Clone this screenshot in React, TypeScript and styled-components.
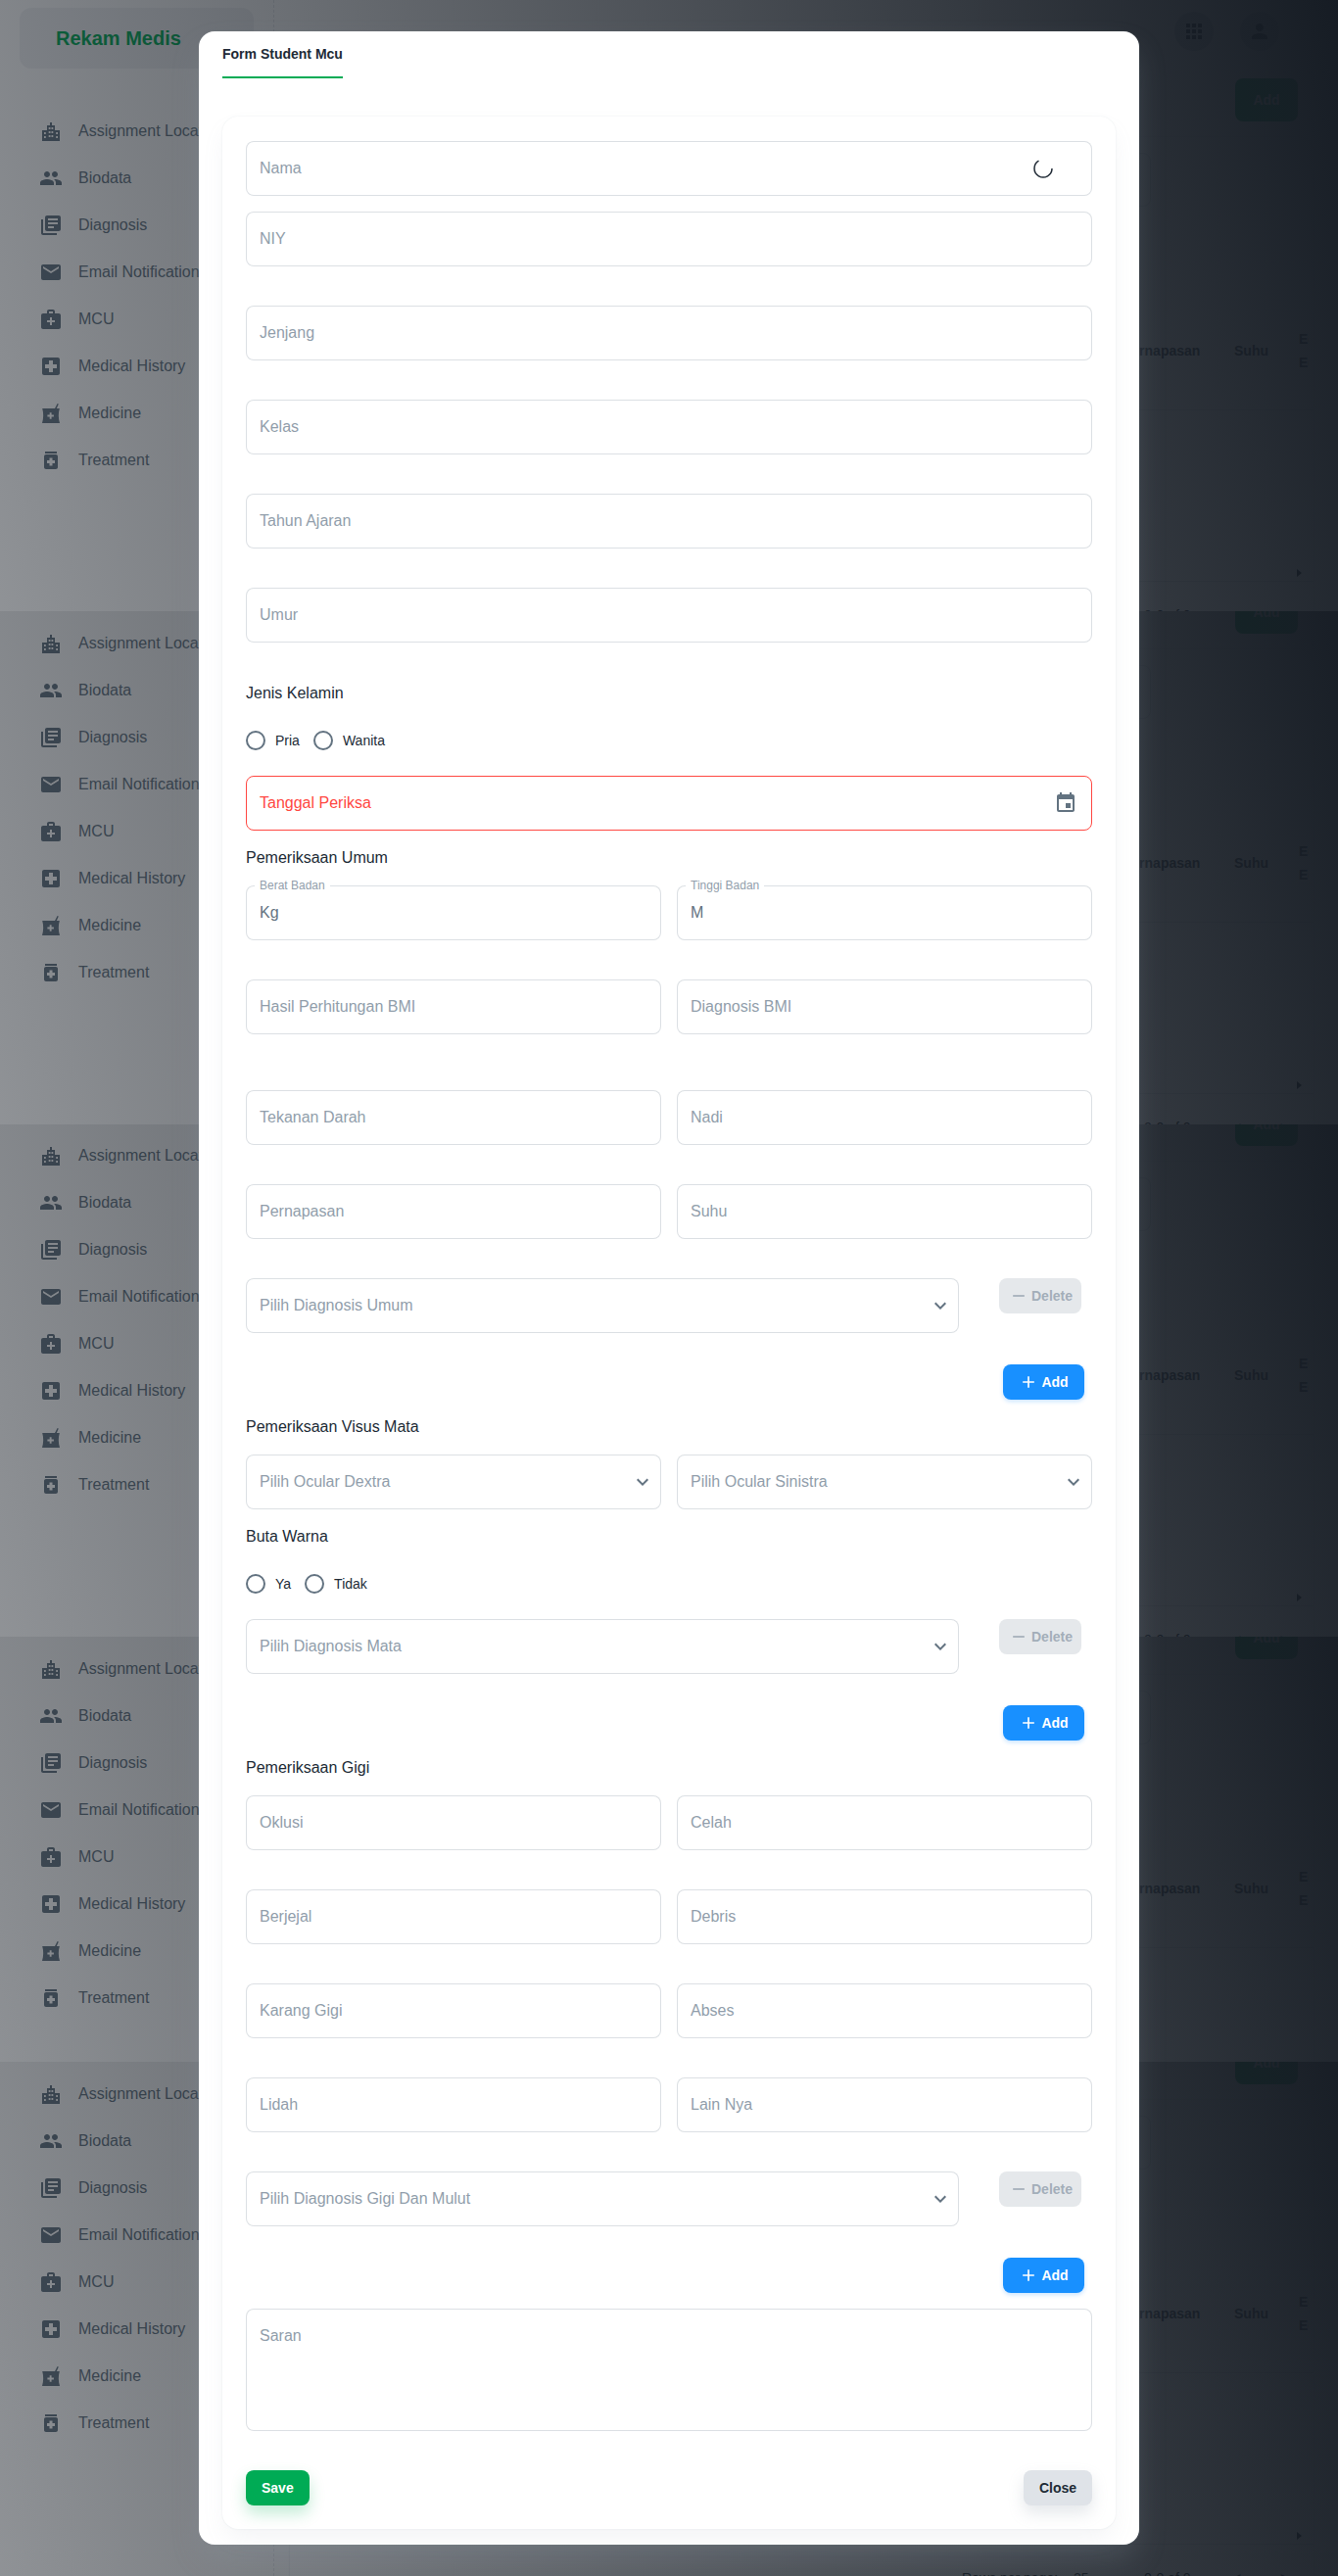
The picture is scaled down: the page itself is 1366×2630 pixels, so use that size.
import React from "react";
import styled, { createGlobalStyle } from "styled-components";
import {
  MdAdd,
  MdApps,
  MdEmail,
  MdEvent,
  MdKeyboardArrowDown,
  MdLibraryBooks,
  MdLocalHospital,
  MdMedicalServices,
  MdMedication,
  MdPeople,
  MdPerson,
  MdRemove,
} from "react-icons/md";

const GlobalStyle = createGlobalStyle`
  html, body {
    margin: 0;
    padding: 0;
    background: #fff;
  }
  * {
    box-sizing: border-box;
  }
  body {
    font-family: "Liberation Sans", Arial, sans-serif;
    color: #212b36;
  }
`;

const Page = styled.div`
  position: relative;
  width: 1366px;
  height: 2630px;
  overflow: hidden;
`;

/* the page behind the dialog, one slice per scrolled screen */
const Strip = styled.div<{ $height: number }>`
  height: ${(p) => p.$height}px;
  overflow: hidden;
`;

const Screen = styled.div<{ $scroll: number }>`
  position: relative;
  display: flex;
  width: 1366px;
  height: 626px;
  margin-top: -${(p) => p.$scroll}px;
  overflow: hidden;
  background: #fff;
`;

const Backdrop = styled.div`
  position: absolute;
  inset: 0;
  background: linear-gradient(75deg, rgba(22, 28, 36, 0.48) 0%, rgb(22, 28, 36) 100%);
`;

const Sidebar = styled.aside`
  flex: 0 0 280px;
  border-right: 1px dashed rgba(145, 158, 171, 0.24);
`;

const Logo = styled.div`
  display: flex;
  align-items: center;
  height: 62px;
  margin: 8px 20px 40px;
  padding-left: 37px;
  border-radius: 12px;
  background: rgba(145, 158, 171, 0.12);
  color: #00ab55;
  font-size: 20px;
  font-weight: 700;
`;

const NavItem = styled.div`
  display: flex;
  align-items: center;
  gap: 16px;
  height: 48px;
  padding-left: 40px;
  color: #637381;
  font-size: 16px;
  white-space: nowrap;

  svg {
    flex: none;
  }
`;

const Main = styled.main`
  flex: 1;
  min-width: 0;
  padding: 0 25px 0 16px;
`;

const TopBar = styled.div`
  display: flex;
  justify-content: flex-end;
  gap: 27px;
  height: 64px;
  padding: 12px 35px 0 0;
`;

const RoundIcon = styled.div`
  display: flex;
  align-items: center;
  justify-content: center;
  width: 40px;
  height: 40px;
  border-radius: 50%;
  background: #d0d6dc;
  color: #212b36;
`;

const ActionRow = styled.div`
  display: flex;
  justify-content: flex-end;
  margin: 16px 16px 16px 0;
`;

const GreenAction = styled.div`
  display: flex;
  align-items: center;
  justify-content: center;
  width: 64px;
  height: 44px;
  border-radius: 8px;
  background: #00ab55;
  color: #fff;
  font-size: 14px;
  font-weight: 700;
`;

const ListCard = styled.section`
  height: 560px;
  border-radius: 16px;
  overflow: hidden;
  box-shadow: 0 0 2px rgba(145, 158, 171, 0.4);
`;

const SearchBox = styled.div`
  width: 863px;
  height: 55px;
  margin: 16px 16px 0;
  border: 1px solid rgba(145, 158, 171, 0.32);
  border-radius: 8px;
`;

const HeadRow = styled.div`
  display: flex;
  align-items: center;
  height: 122px;
  margin-top: 86px;
  padding-left: 850px;
  border-bottom: 1px solid rgba(145, 158, 171, 0.24);
  color: #404a55;
  font-size: 14px;
  font-weight: 700;
  white-space: nowrap;
`;

const HeadCell = styled.span<{ $width: number }>`
  flex: 0 0 ${(p) => p.$width}px;
`;

const StackedHead = styled.div`
  display: flex;
  flex-direction: column;
  gap: 8px;
  width: 10px;
  overflow: hidden;
`;

const ScrollTrack = styled.div`
  display: flex;
  align-items: center;
  justify-content: flex-end;
  height: 18px;
  margin-top: 157px;
  padding-right: 12px;
  border-bottom: 1px solid rgba(145, 158, 171, 0.24);
`;

const ScrollArrow = styled.span`
  width: 0;
  height: 0;
  border-top: 4px solid transparent;
  border-bottom: 4px solid transparent;
  border-left: 5px solid #212b36;
`;

const Pagination = styled.div`
  display: flex;
  align-items: center;
  height: 68px;
  padding-left: 686px;
  color: #212b36;
  font-size: 14px;
  white-space: nowrap;
`;

const PageText = styled.span<{ $width: number }>`
  flex: 0 0 ${(p) => p.$width}px;
`;

/* dialog */
const Modal = styled.div`
  position: absolute;
  top: 32px;
  left: 203px;
  width: 960px;
  height: 2566px;
  padding: 0 24px;
  border-radius: 16px;
  background: #fff;
  box-shadow: 0 0 2px rgba(145, 158, 171, 0.24), 0 16px 32px -4px rgba(145, 158, 171, 0.24);
`;

const TabBar = styled.div`
  display: flex;
  height: 48px;
`;

const Tab = styled.div`
  display: flex;
  align-items: center;
  width: 123px;
  border-bottom: 2px solid #00ab55;
  color: #212b36;
  font-size: 14px;
  font-weight: 700;
  white-space: nowrap;
`;

const FormCard = styled.div`
  display: flex;
  flex-direction: column;
  height: 2463px;
  margin-top: 39px;
  padding: 25px 24px 24px;
  border-radius: 16px;
  background: #fff;
  box-shadow: 0 0 2px rgba(145, 158, 171, 0.2), 0 12px 24px -4px rgba(145, 158, 171, 0.12);
`;

const Row = styled.div<{ $top?: number }>`
  display: flex;
  gap: 16px;
  margin-top: ${(p) => p.$top ?? 0}px;
`;

const ButtonRow = styled.div<{ $top: number }>`
  display: flex;
  justify-content: flex-end;
  margin-top: ${(p) => p.$top}px;
  padding-right: 8px;
`;

const FooterRow = styled.div`
  display: flex;
  justify-content: space-between;
  margin-top: 40px;
`;

const SectionLabel = styled.div<{ $top: number }>`
  margin-top: ${(p) => p.$top}px;
  color: #212b36;
  font-size: 16px;
  line-height: 24px;
`;

const FieldBox = styled.div<{ $error?: boolean; $grow?: boolean }>`
  position: relative;
  display: flex;
  align-items: center;
  flex: ${(p) => (p.$grow ? "1 1 0" : "0 0 auto")};
  min-width: 0;
  height: 56px;
  border: 1px solid ${(p) => (p.$error ? "#ff4842" : "rgba(145, 158, 171, 0.32)")};
  border-radius: 8px;
  background: #fff;
`;

const FieldInput = styled.input<{ $error?: boolean }>`
  flex: 1;
  min-width: 0;
  height: 100%;
  padding: 0 13px;
  border: 0;
  outline: 0;
  background: transparent;
  color: #637381;
  font-family: inherit;
  font-size: 16px;

  &::placeholder {
    color: ${(p) => (p.$error ? "#ff4842" : "#919eab")};
    opacity: 1;
  }
`;

const FloatLabel = styled.label`
  position: absolute;
  top: -8px;
  left: 8px;
  padding: 0 5px;
  background: #fff;
  color: #919eab;
  font-size: 12px;
  line-height: 14px;
`;

const Adornment = styled.span<{ $right: number }>`
  display: flex;
  flex: none;
  margin-right: ${(p) => p.$right}px;
  color: #637381;
`;

const SelectRow = styled.div<{ $top: number }>`
  display: flex;
  align-items: flex-start;
  margin-top: ${(p) => p.$top}px;
`;

const SelectSlot = styled.div`
  display: flex;
  width: 728px;
`;

const RadioRow = styled.div<{ $top: number }>`
  display: flex;
  align-items: center;
  height: 42px;
  margin-top: ${(p) => p.$top}px;
`;

const RadioOption = styled.label`
  display: flex;
  align-items: center;
  gap: 10px;
  margin-right: 14px;
  color: #212b36;
  font-size: 14px;
`;

const RadioDot = styled.input`
  width: 20px;
  height: 20px;
  margin: 0;
  border: 2px solid #637381;
  border-radius: 50%;
  appearance: none;
  background: #fff;
`;

const DeleteButton = styled.button`
  display: flex;
  align-items: center;
  gap: 3px;
  width: 84px;
  height: 36px;
  margin-left: 41px;
  padding: 0 0 0 10px;
  border: 0;
  border-radius: 8px;
  background: rgba(145, 158, 171, 0.24);
  color: rgba(145, 158, 171, 0.8);
  font-family: inherit;
  font-size: 14px;
  font-weight: 700;
`;

const AddButton = styled.button`
  display: flex;
  align-items: center;
  justify-content: center;
  gap: 3px;
  width: 83px;
  height: 36px;
  padding: 0;
  border: 0;
  border-radius: 8px;
  background: #1890ff;
  color: #fff;
  font-family: inherit;
  font-size: 14px;
  font-weight: 700;
  box-shadow: 0 2px 4px rgba(24, 144, 255, 0.24);
`;

const FooterButton = styled.button<{ $save?: boolean }>`
  height: 36px;
  padding: 0 16px;
  border: 0;
  border-radius: 8px;
  background: ${(p) => (p.$save ? "#00ab55" : "#dfe3e8")};
  color: ${(p) => (p.$save ? "#fff" : "#212b36")};
  font-family: inherit;
  font-size: 14px;
  font-weight: 700;
  box-shadow: 0 8px 16px ${(p) => (p.$save ? "rgba(0, 171, 85, 0.24)" : "rgba(145, 158, 171, 0.24)")};
`;

const NoteArea = styled.textarea`
  display: block;
  width: 100%;
  height: 125px;
  margin-top: 16px;
  padding: 15px 13px;
  border: 1px solid rgba(145, 158, 171, 0.32);
  border-radius: 8px;
  outline: 0;
  resize: none;
  font-family: inherit;
  font-size: 16px;
  line-height: 23px;

  &::placeholder {
    color: #919eab;
    opacity: 1;
  }
`;

const BuildingIcon = () => (
  <svg width="24" height="24" viewBox="0 0 24 24" fill="currentColor">
    <path
      fillRule="evenodd"
      d="M11 3h2v3h3v5h5v11H3V11h5V6h3zM9.7 8v2h1.8V8zm2.8 0v2h1.8V8zm-2.8 4v2h1.8v-2zm2.8 0v2h1.8v-2zm-2.8 4v2h1.8v-2zm2.8 0v2h1.8v-2zM5 13v2h1.8v-2zm0 4v2h1.8v-2zm12.2-4v2H19v-2zm0 4v2H19v-2z"
    />
  </svg>
);

const MortarIcon = () => (
  <svg width="24" height="24" viewBox="0 0 24 24" fill="currentColor">
    <path
      fillRule="evenodd"
      d="M3.2 7H16l2.6-5 1.2.6L17.8 7h3c-1.4 5-1.3 10 .2 15H3c1.5-5 1.6-10 .2-15zM10.7 11.2v2.3H8.4v1.9h2.3v2.3h1.9v-2.3h2.3v-1.9h-2.3v-2.3z"
    />
  </svg>
);

const Spinner = () => (
  <svg width="20" height="20" viewBox="0 0 20 20" fill="none" stroke="#212b36" strokeWidth="1.5">
    <path d="M5.5 2.2A9 9 0 1 0 19 10" />
  </svg>
);

const navItems = [
  { label: "Assignment Location", icon: <BuildingIcon /> },
  { label: "Biodata", icon: <MdPeople size={24} /> },
  { label: "Diagnosis", icon: <MdLibraryBooks size={24} /> },
  { label: "Email Notification", icon: <MdEmail size={24} /> },
  { label: "MCU", icon: <MdMedicalServices size={24} /> },
  { label: "Medical History", icon: <MdLocalHospital size={24} /> },
  { label: "Medicine", icon: <MortarIcon /> },
  { label: "Treatment", icon: <MdMedication size={24} /> },
];

const strips = [
  { height: 624, scroll: 0 },
  { height: 524, scroll: 101 },
  { height: 523, scroll: 102 },
  { height: 434, scroll: 101 },
  { height: 525, scroll: 101 },
];

const ListScreen: React.FC<{ scroll: number }> = ({ scroll }) => (
  <Screen $scroll={scroll}>
    <Sidebar>
      <Logo>Rekam Medis</Logo>
      {navItems.map((item) => (
        <NavItem key={item.label}>
          {item.icon}
          {item.label}
        </NavItem>
      ))}
    </Sidebar>
    <Main>
      <TopBar>
        <RoundIcon>
          <MdApps size={24} />
        </RoundIcon>
        <RoundIcon>
          <MdPerson size={24} />
        </RoundIcon>
      </TopBar>
      <ActionRow>
        <GreenAction>Add</GreenAction>
      </ActionRow>
      <ListCard>
        <SearchBox />
        <HeadRow>
          <HeadCell $width={114}>Pernapasan</HeadCell>
          <HeadCell $width={66}>Suhu</HeadCell>
          <StackedHead>
            <span>Edit</span>
            <span>Edit</span>
          </StackedHead>
        </HeadRow>
        <ScrollTrack>
          <ScrollArrow />
        </ScrollTrack>
        <Pagination>
          <PageText $width={114}>Rows per page:</PageText>
          <PageText $width={72}>25</PageText>
          <PageText $width={91}>0-0 of 0</PageText>
          <PageText $width={48}>{"<"}</PageText>
          <PageText $width={20}>{">"}</PageText>
        </Pagination>
      </ListCard>
    </Main>
    <Backdrop />
  </Screen>
);

interface TextFieldProps {
  placeholder?: string;
  label?: string;
  value?: string;
  error?: boolean;
  grow?: boolean;
  adornment?: React.ReactNode;
  adornmentRight?: number;
}

const TextField: React.FC<TextFieldProps> = ({
  placeholder,
  label,
  value,
  error,
  grow = true,
  adornment,
  adornmentRight = 0,
}) => (
  <FieldBox $error={error} $grow={grow}>
    {label && <FloatLabel>{label}</FloatLabel>}
    <FieldInput $error={error} placeholder={placeholder} defaultValue={value} />
    {adornment && <Adornment $right={adornmentRight}>{adornment}</Adornment>}
  </FieldBox>
);

const SelectField: React.FC<{ placeholder: string }> = ({ placeholder }) => (
  <TextField
    placeholder={placeholder}
    adornment={<MdKeyboardArrowDown size={24} />}
    adornmentRight={6}
  />
);

const DiagnosisRow: React.FC<{ placeholder: string; top: number }> = ({ placeholder, top }) => (
  <>
    <SelectRow $top={top}>
      <SelectSlot>
        <SelectField placeholder={placeholder} />
      </SelectSlot>
      <DeleteButton type="button">
        <MdRemove size={20} />
        Delete
      </DeleteButton>
    </SelectRow>
    <ButtonRow $top={32}>
      <AddButton type="button">
        <MdAdd size={20} />
        Add
      </AddButton>
    </ButtonRow>
  </>
);

const RadioGroup: React.FC<{ name: string; options: string[]; top: number }> = ({
  name,
  options,
  top,
}) => (
  <RadioRow $top={top}>
    {options.map((option) => (
      <RadioOption key={option}>
        <RadioDot type="radio" name={name} />
        {option}
      </RadioOption>
    ))}
  </RadioRow>
);

const PairRow: React.FC<{ left: string; right: string; top: number }> = ({ left, right, top }) => (
  <Row $top={top}>
    <TextField placeholder={left} />
    <TextField placeholder={right} />
  </Row>
);

const App: React.FC = () => (
  <Page>
    <GlobalStyle />
    {strips.map((strip, index) => (
      <Strip key={index} $height={strip.height}>
        <ListScreen scroll={strip.scroll} />
      </Strip>
    ))}
    <Modal>
      <TabBar>
        <Tab>Form Student Mcu</Tab>
      </TabBar>
      <FormCard>
        <Row>
          <TextField placeholder="Nama" adornment={<Spinner />} adornmentRight={39} />
        </Row>
        <Row $top={16}>
          <TextField placeholder="NIY" />
        </Row>
        <Row $top={40}>
          <TextField placeholder="Jenjang" />
        </Row>
        <Row $top={40}>
          <TextField placeholder="Kelas" />
        </Row>
        <Row $top={40}>
          <TextField placeholder="Tahun Ajaran" />
        </Row>
        <Row $top={40}>
          <TextField placeholder="Umur" />
        </Row>
        <SectionLabel $top={40}>Jenis Kelamin</SectionLabel>
        <RadioGroup name="gender" options={["Pria", "Wanita"]} top={15} />
        <Row $top={15}>
          <TextField
            placeholder="Tanggal Periksa"
            error
            adornment={<MdEvent size={24} />}
            adornmentRight={14}
          />
        </Row>
        <SectionLabel $top={16}>Pemeriksaan Umum</SectionLabel>
        <Row $top={16}>
          <TextField label="Berat Badan" value="Kg" />
          <TextField label="Tinggi Badan" value="M" />
        </Row>
        <PairRow left="Hasil Perhitungan BMI" right="Diagnosis BMI" top={40} />
        <PairRow left="Tekanan Darah" right="Nadi" top={57} />
        <PairRow left="Pernapasan" right="Suhu" top={40} />
        <DiagnosisRow placeholder="Pilih Diagnosis Umum" top={40} />
        <SectionLabel $top={16}>Pemeriksaan Visus Mata</SectionLabel>
        <Row $top={16}>
          <SelectField placeholder="Pilih Ocular Dextra" />
          <SelectField placeholder="Pilih Ocular Sinistra" />
        </Row>
        <SectionLabel $top={16}>Buta Warna</SectionLabel>
        <RadioGroup name="colorblind" options={["Ya", "Tidak"]} top={15} />
        <DiagnosisRow placeholder="Pilih Diagnosis Mata" top={15} />
        <SectionLabel $top={16}>Pemeriksaan Gigi</SectionLabel>
        <PairRow left="Oklusi" right="Celah" top={16} />
        <PairRow left="Berjejal" right="Debris" top={40} />
        <PairRow left="Karang Gigi" right="Abses" top={40} />
        <PairRow left="Lidah" right="Lain Nya" top={40} />
        <DiagnosisRow placeholder="Pilih Diagnosis Gigi Dan Mulut" top={40} />
        <NoteArea placeholder="Saran" />
        <FooterRow>
          <FooterButton type="button" $save>
            Save
          </FooterButton>
          <FooterButton type="button">Close</FooterButton>
        </FooterRow>
      </FormCard>
    </Modal>
  </Page>
);

export default App;
